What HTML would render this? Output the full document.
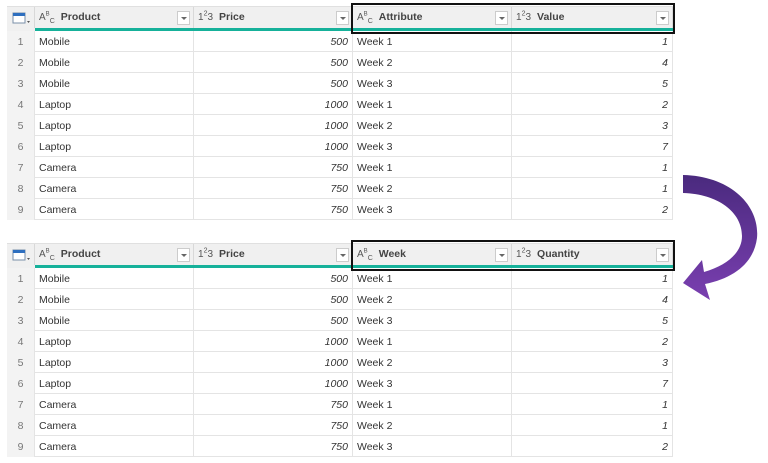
<!DOCTYPE html>
<html><head><meta charset="utf-8"><style>
*{margin:0;padding:0;box-sizing:border-box}
body{width:768px;height:463px;background:#fff;position:relative;overflow:hidden;font-family:"Liberation Sans",sans-serif;color:#333}
.t{position:absolute;left:7px;width:666px}
.h{position:absolute;left:0;top:0;height:22px;width:666px;background:#f0f0f0;border-top:1px solid #e0e0e0}
.tl{position:absolute;left:0;top:22px;width:666px;height:3px;background:#16b19a}
.tl0{position:absolute;left:0;top:22px;width:28px;height:3px;background:#f0f0f0}
.hc{position:absolute;top:0;height:22px;border-right:1px solid #d8d8d8;font-size:10.5px;font-weight:bold;line-height:21px;color:#444}
.hc .ic{display:inline-block;height:21px;line-height:21px;vertical-align:top;font-weight:normal;color:#555;font-size:10px;margin-left:4px;margin-right:6px}
.ic sup,.ic sub{line-height:0}
.dd{position:absolute;right:3px;top:4px;width:13px;height:14px;background:#fff;border:1px solid #ccc}
.dd:after{content:"";position:absolute;left:3px;top:5px;border-left:3px solid transparent;border-right:3px solid transparent;border-top:3px solid #666}
.r{position:absolute;left:0;width:666px;height:21px;border-bottom:1px solid #e4e4e4;font-size:10.5px;line-height:23px}
.c{position:absolute;top:0;height:21px;border-right:1px solid #e4e4e4;padding:0 4px;white-space:nowrap}
.n{color:#777;text-align:center;background:#f3f3f3}
.num{text-align:right;font-style:italic}
.box{position:absolute;border:2px solid #111}
</style></head><body>

<div class="t" style="top:6px">
 <div class="h">
  <div class="hc" style="left:0;width:28px"><svg width="28" height="22"><rect x="6" y="6" width="12" height="10" fill="#fff" stroke="#7a8fa8"/><rect x="6" y="6" width="12" height="3" fill="#2e6fbf"/><path d="M20 14h3l-1.5 2z" fill="#555"/></svg></div>
  <div class="hc" style="left:28px;width:159px"><span class="ic">A<sup style="font-size:6px">B</sup><sub style="font-size:7px">C</sub></span>Product<div class="dd"></div></div>
  <div class="hc" style="left:187px;width:159px"><span class="ic">1<sup style="font-size:7px">2</sup>3</span>Price<div class="dd"></div></div>
  <div class="hc" style="left:346px;width:159px"><span class="ic">A<sup style="font-size:6px">B</sup><sub style="font-size:7px">C</sub></span>Attribute<div class="dd"></div></div>
  <div class="hc" style="left:505px;width:161px"><span class="ic">1<sup style="font-size:7px">2</sup>3</span>Value<div class="dd"></div></div>
 </div>
 <div class="tl"></div><div class="tl0"></div>
 <div class="r" style="top:25px"><div class="c n" style="left:0;width:28px">1</div><div class="c" style="left:28px;width:159px">Mobile</div><div class="c num" style="left:187px;width:159px">500</div><div class="c" style="left:346px;width:159px">Week 1</div><div class="c num" style="left:505px;width:161px">1</div></div>
 <div class="r" style="top:46px"><div class="c n" style="left:0;width:28px">2</div><div class="c" style="left:28px;width:159px">Mobile</div><div class="c num" style="left:187px;width:159px">500</div><div class="c" style="left:346px;width:159px">Week 2</div><div class="c num" style="left:505px;width:161px">4</div></div>
 <div class="r" style="top:67px"><div class="c n" style="left:0;width:28px">3</div><div class="c" style="left:28px;width:159px">Mobile</div><div class="c num" style="left:187px;width:159px">500</div><div class="c" style="left:346px;width:159px">Week 3</div><div class="c num" style="left:505px;width:161px">5</div></div>
 <div class="r" style="top:88px"><div class="c n" style="left:0;width:28px">4</div><div class="c" style="left:28px;width:159px">Laptop</div><div class="c num" style="left:187px;width:159px">1000</div><div class="c" style="left:346px;width:159px">Week 1</div><div class="c num" style="left:505px;width:161px">2</div></div>
 <div class="r" style="top:109px"><div class="c n" style="left:0;width:28px">5</div><div class="c" style="left:28px;width:159px">Laptop</div><div class="c num" style="left:187px;width:159px">1000</div><div class="c" style="left:346px;width:159px">Week 2</div><div class="c num" style="left:505px;width:161px">3</div></div>
 <div class="r" style="top:130px"><div class="c n" style="left:0;width:28px">6</div><div class="c" style="left:28px;width:159px">Laptop</div><div class="c num" style="left:187px;width:159px">1000</div><div class="c" style="left:346px;width:159px">Week 3</div><div class="c num" style="left:505px;width:161px">7</div></div>
 <div class="r" style="top:151px"><div class="c n" style="left:0;width:28px">7</div><div class="c" style="left:28px;width:159px">Camera</div><div class="c num" style="left:187px;width:159px">750</div><div class="c" style="left:346px;width:159px">Week 1</div><div class="c num" style="left:505px;width:161px">1</div></div>
 <div class="r" style="top:172px"><div class="c n" style="left:0;width:28px">8</div><div class="c" style="left:28px;width:159px">Camera</div><div class="c num" style="left:187px;width:159px">750</div><div class="c" style="left:346px;width:159px">Week 2</div><div class="c num" style="left:505px;width:161px">1</div></div>
 <div class="r" style="top:193px"><div class="c n" style="left:0;width:28px">9</div><div class="c" style="left:28px;width:159px">Camera</div><div class="c num" style="left:187px;width:159px">750</div><div class="c" style="left:346px;width:159px">Week 3</div><div class="c num" style="left:505px;width:161px">2</div></div>
</div>
<div class="box" style="left:351px;top:3px;width:324px;height:31px"></div>

<div class="t" style="top:243px">
 <div class="h">
  <div class="hc" style="left:0;width:28px"><svg width="28" height="22"><rect x="6" y="6" width="12" height="10" fill="#fff" stroke="#7a8fa8"/><rect x="6" y="6" width="12" height="3" fill="#2e6fbf"/><path d="M20 14h3l-1.5 2z" fill="#555"/></svg></div>
  <div class="hc" style="left:28px;width:159px"><span class="ic">A<sup style="font-size:6px">B</sup><sub style="font-size:7px">C</sub></span>Product<div class="dd"></div></div>
  <div class="hc" style="left:187px;width:159px"><span class="ic">1<sup style="font-size:7px">2</sup>3</span>Price<div class="dd"></div></div>
  <div class="hc" style="left:346px;width:159px"><span class="ic">A<sup style="font-size:6px">B</sup><sub style="font-size:7px">C</sub></span>Week<div class="dd"></div></div>
  <div class="hc" style="left:505px;width:161px"><span class="ic">1<sup style="font-size:7px">2</sup>3</span>Quantity<div class="dd"></div></div>
 </div>
 <div class="tl"></div><div class="tl0"></div>
 <div class="r" style="top:25px"><div class="c n" style="left:0;width:28px">1</div><div class="c" style="left:28px;width:159px">Mobile</div><div class="c num" style="left:187px;width:159px">500</div><div class="c" style="left:346px;width:159px">Week 1</div><div class="c num" style="left:505px;width:161px">1</div></div>
 <div class="r" style="top:46px"><div class="c n" style="left:0;width:28px">2</div><div class="c" style="left:28px;width:159px">Mobile</div><div class="c num" style="left:187px;width:159px">500</div><div class="c" style="left:346px;width:159px">Week 2</div><div class="c num" style="left:505px;width:161px">4</div></div>
 <div class="r" style="top:67px"><div class="c n" style="left:0;width:28px">3</div><div class="c" style="left:28px;width:159px">Mobile</div><div class="c num" style="left:187px;width:159px">500</div><div class="c" style="left:346px;width:159px">Week 3</div><div class="c num" style="left:505px;width:161px">5</div></div>
 <div class="r" style="top:88px"><div class="c n" style="left:0;width:28px">4</div><div class="c" style="left:28px;width:159px">Laptop</div><div class="c num" style="left:187px;width:159px">1000</div><div class="c" style="left:346px;width:159px">Week 1</div><div class="c num" style="left:505px;width:161px">2</div></div>
 <div class="r" style="top:109px"><div class="c n" style="left:0;width:28px">5</div><div class="c" style="left:28px;width:159px">Laptop</div><div class="c num" style="left:187px;width:159px">1000</div><div class="c" style="left:346px;width:159px">Week 2</div><div class="c num" style="left:505px;width:161px">3</div></div>
 <div class="r" style="top:130px"><div class="c n" style="left:0;width:28px">6</div><div class="c" style="left:28px;width:159px">Laptop</div><div class="c num" style="left:187px;width:159px">1000</div><div class="c" style="left:346px;width:159px">Week 3</div><div class="c num" style="left:505px;width:161px">7</div></div>
 <div class="r" style="top:151px"><div class="c n" style="left:0;width:28px">7</div><div class="c" style="left:28px;width:159px">Camera</div><div class="c num" style="left:187px;width:159px">750</div><div class="c" style="left:346px;width:159px">Week 1</div><div class="c num" style="left:505px;width:161px">1</div></div>
 <div class="r" style="top:172px"><div class="c n" style="left:0;width:28px">8</div><div class="c" style="left:28px;width:159px">Camera</div><div class="c num" style="left:187px;width:159px">750</div><div class="c" style="left:346px;width:159px">Week 2</div><div class="c num" style="left:505px;width:161px">1</div></div>
 <div class="r" style="top:193px"><div class="c n" style="left:0;width:28px">9</div><div class="c" style="left:28px;width:159px">Camera</div><div class="c num" style="left:187px;width:159px">750</div><div class="c" style="left:346px;width:159px">Week 3</div><div class="c num" style="left:505px;width:161px">2</div></div>
</div>
<div class="box" style="left:351px;top:240px;width:324px;height:31px"></div>

<svg style="position:absolute;left:0;top:0" width="768" height="463">
 <defs><linearGradient id="g" x1="0" y1="0" x2="0" y2="1"><stop offset="0" stop-color="#4a2a7e"/><stop offset="1" stop-color="#7a3fb0"/></linearGradient></defs>
 <path d="M683 175 C730 176 760 205 757 238 C754 262 735 278 705 284 L710 300 L683 283 L702 260 L704 272 C728 265 742 252 742 236 C742 212 718 194 683 193 Z" fill="url(#g)"/>
</svg>
</body></html>
